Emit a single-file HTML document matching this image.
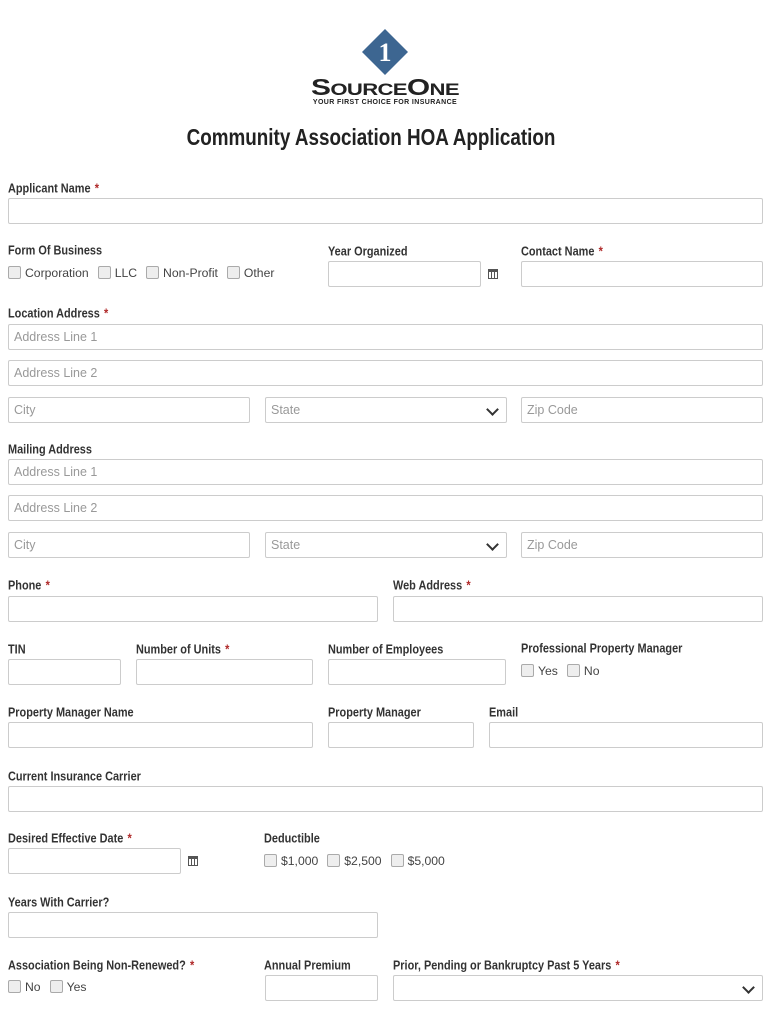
<!DOCTYPE html><html><head><style>
body{margin:0;width:770px;height:1024px;background:#fff;position:relative;font-family:"Liberation Sans",sans-serif;overflow:hidden}
.l{position:absolute;font-family:"Liberation Sans",sans-serif;font-weight:bold;font-size:13px;color:#333;transform:translateY(-45%) scaleX(0.84);transform-origin:left center;white-space:nowrap}
.l b{color:#b02a2a;margin-left:5px}
.i{position:absolute;border:1px solid #ccc;border-radius:2px;box-sizing:border-box;height:26px;background:#fff;font-size:12.5px;color:#999;line-height:24px;padding-left:5px}
.c{position:absolute;font-size:12.2px;color:#444;transform:translateY(-50%);white-space:nowrap}
.c i{display:inline-block;width:11px;height:11px;border:1px solid #aaa;border-radius:2px;background:#eee;vertical-align:-2px;margin-right:4px;margin-left:0}
.c span{margin-right:9px}
.cal{position:absolute;width:10px;height:10px;border:1px solid #555;border-top:3px solid #555;box-sizing:border-box;background:repeating-linear-gradient(90deg,#fff 0 2px,#555 2px 3px)}
.chev{position:absolute;right:9px;top:7px;width:7px;height:7px;border-right:2px solid #333;border-bottom:2px solid #333;transform:rotate(45deg)}
</style></head><body>
<svg style="position:absolute;left:362px;top:29px" width="46" height="46" viewBox="0 0 46 46"><polygon points="23,0 46,23 23,46 0,23" fill="#3d6691"/><text x="23" y="32" font-family="Liberation Serif" font-weight="bold" font-size="26" fill="#fff" text-anchor="middle">1</text></svg>
<div style="position:absolute;left:285px;top:75px;width:200px;text-align:center;font-family:'Liberation Sans',sans-serif;font-weight:bold;font-size:23px;line-height:24px;color:#222;transform:scaleX(1.3);letter-spacing:-0.5px">S<span style="font-size:17px">OURCE</span>O<span style="font-size:17px">NE</span></div>
<div style="position:absolute;left:291px;top:99px;width:188px;text-align:center;font-size:7px;font-weight:bold;color:#222;letter-spacing:.4px">YOUR FIRST CHOICE FOR INSURANCE</div>
<div style="position:absolute;left:-14px;width:770px;top:124px;text-align:center;font-family:'Liberation Sans',sans-serif;font-weight:bold;font-size:23px;color:#222;transform:scaleX(0.82)">Community Association HOA Application</div>

<div class="l" style="left:8px;top:187px">Applicant Name<b>*</b></div>
<div class="i" style="left:8px;top:198px;width:755px"></div>

<div class="l" style="left:8px;top:249px">Form Of Business</div>
<div class="c" style="left:8px;top:273px"><i></i><span>Corporation</span><i></i><span>LLC</span><i></i><span>Non-Profit</span><i></i><span>Other</span></div>
<div class="l" style="left:328px;top:250px">Year Organized</div>
<div class="i" style="left:328px;top:261px;width:153px"></div><div class="cal" style="left:488px;top:269px"></div>
<div class="l" style="left:521px;top:250px">Contact Name<b>*</b></div>
<div class="i" style="left:521px;top:261px;width:242px"></div>

<div class="l" style="left:8px;top:312px">Location Address<b>*</b></div>
<div class="i" style="left:8px;top:324px;width:755px">Address Line 1</div>
<div class="i" style="left:8px;top:360px;width:755px">Address Line 2</div>
<div class="i" style="left:8px;top:397px;width:242px">City</div>
<div class="i" style="left:265px;top:397px;width:242px">State<div class="chev"></div></div>
<div class="i" style="left:521px;top:397px;width:242px">Zip Code</div>

<div class="l" style="left:8px;top:448px">Mailing Address</div>
<div class="i" style="left:8px;top:459px;width:755px">Address Line 1</div>
<div class="i" style="left:8px;top:495px;width:755px">Address Line 2</div>
<div class="i" style="left:8px;top:532px;width:242px">City</div>
<div class="i" style="left:265px;top:532px;width:242px">State<div class="chev"></div></div>
<div class="i" style="left:521px;top:532px;width:242px">Zip Code</div>

<div class="l" style="left:8px;top:584px">Phone<b>*</b></div>
<div class="i" style="left:8px;top:596px;width:370px"></div>
<div class="l" style="left:393px;top:584px">Web Address<b>*</b></div>
<div class="i" style="left:393px;top:596px;width:370px"></div>

<div class="l" style="left:8px;top:648px">TIN</div>
<div class="i" style="left:8px;top:659px;width:113px"></div>
<div class="l" style="left:136px;top:648px">Number of Units<b>*</b></div>
<div class="i" style="left:136px;top:659px;width:177px"></div>
<div class="l" style="left:328px;top:648px">Number of Employees</div>
<div class="i" style="left:328px;top:659px;width:178px"></div>
<div class="l" style="left:521px;top:647px">Professional Property Manager</div>
<div class="c" style="left:521px;top:671px"><i></i><span>Yes</span><i></i><span>No</span></div>

<div class="l" style="left:8px;top:711px">Property Manager Name</div>
<div class="i" style="left:8px;top:722px;width:305px"></div>
<div class="l" style="left:328px;top:711px">Property Manager</div>
<div class="i" style="left:328px;top:722px;width:146px"></div>
<div class="l" style="left:489px;top:711px">Email</div>
<div class="i" style="left:489px;top:722px;width:274px"></div>

<div class="l" style="left:8px;top:775px">Current Insurance Carrier</div>
<div class="i" style="left:8px;top:786px;width:755px"></div>

<div class="l" style="left:8px;top:837px">Desired Effective Date<b>*</b></div>
<div class="i" style="left:8px;top:848px;width:173px"></div><div class="cal" style="left:188px;top:856px"></div>
<div class="l" style="left:264px;top:837px">Deductible</div>
<div class="c" style="left:264px;top:861px"><i></i><span>$1,000</span><i></i><span>$2,500</span><i></i><span>$5,000</span></div>

<div class="l" style="left:8px;top:901px">Years With Carrier?</div>
<div class="i" style="left:8px;top:912px;width:370px"></div>

<div class="l" style="left:8px;top:964px">Association Being Non-Renewed?<b>*</b></div>
<div class="c" style="left:8px;top:987px"><i></i><span>No</span><i></i><span>Yes</span></div>
<div class="l" style="left:264px;top:964px">Annual Premium</div>
<div class="i" style="left:265px;top:975px;width:113px"></div>
<div class="l" style="left:393px;top:964px">Prior, Pending or Bankruptcy Past 5 Years<b>*</b></div>
<div class="i" style="left:393px;top:975px;width:370px"><div class="chev"></div></div>
</body></html>
